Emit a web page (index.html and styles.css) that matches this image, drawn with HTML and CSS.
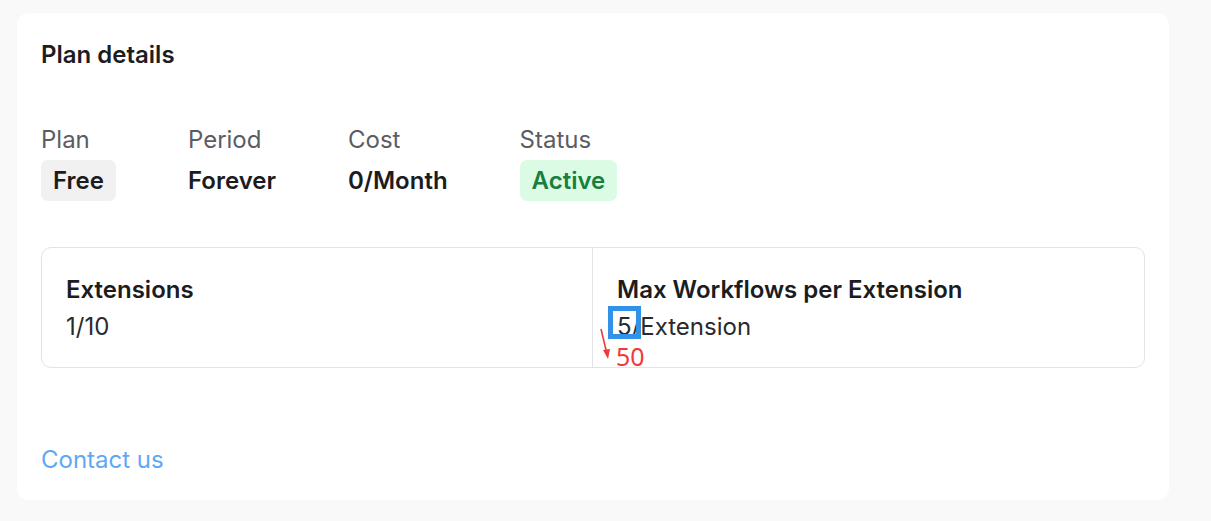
FILE: index.html
```html
<!DOCTYPE html>
<html lang="en">
<head>
<meta charset="utf-8">
<title>Plan details</title>
<link rel="stylesheet" href="styles.css">
</head>
<body>
<div class="page">
  <section class="card">
    <h2 class="title">Plan details</h2>
    <div class="summary">
      <div class="field">
        <div class="label">Plan</div>
        <div class="value badge badge-grey">Free</div>
      </div>
      <div class="field">
        <div class="label">Period</div>
        <div class="value">Forever</div>
      </div>
      <div class="field">
        <div class="label">Cost</div>
        <div class="value">0/Month</div>
      </div>
      <div class="field">
        <div class="label">Status</div>
        <div class="value badge badge-green">Active</div>
      </div>
    </div>
    <div class="limits">
      <div class="limit">
        <div class="limit-name">Extensions</div>
        <div class="limit-value">1/10</div>
      </div>
      <div class="limit limit-right">
        <div class="limit-name">Max Workflows per Extension</div>
        <div class="limit-value annotated">5/Extension
          <span class="mark-box"></span>
          <svg class="mark-arrow" width="14" height="32" viewBox="0 0 14 32"><line x1="2" y1="1" x2="7.5" y2="24" stroke="#f03a3a" stroke-width="1.6"/><polygon points="4,22 11,21 9,31" fill="#f03a3a"/></svg>
          <span class="mark-text">50</span>
        </div>
      </div>
    </div>
    <a class="contact" href="#">Contact us</a>
  </section>
</div>
</body>
</html>
```

FILE: styles.css
```css
html, body {
  margin: 0;
  padding: 0;
  background: #f9f9f9;
  font-family: Inter, "Liberation Sans", sans-serif;
}

.page {
  padding: 13px 0 0 17px;
}

.card {
  width: 1152px;
  height: 487px;
  box-sizing: border-box;
  background: #ffffff;
  border-radius: 12px;
  padding: 28px 24px 26px 24px;
  display: flex;
  flex-direction: column;
}

.title {
  margin: 0;
  font-size: 24px;
  line-height: 28px;
  font-weight: 600;
  color: #1d1d1f;
}

.summary {
  margin-top: 57px;
  display: flex;
  gap: 72px;
}

.field {
  display: flex;
  flex-direction: column;
  align-items: flex-start;
  gap: 6px;
}

.label {
  font-size: 24px;
  line-height: 28px;
  color: #5c5c63;
}

.value {
  font-size: 24px;
  line-height: 29px;
  font-weight: 600;
  color: #1c1c1e;
  padding: 6px 0;
}

.badge {
  padding: 6px 12px;
  border-radius: 7px;
}

.badge-grey {
  background: #f1f1f1;
}

.badge-green {
  background: #dcfbe5;
  color: #17803d;
}

.limits {
  margin-top: 46px;
  display: flex;
  border: 1px solid #e3e3e6;
  border-radius: 10px;
}

.limit {
  flex: 0 0 550px;
  box-sizing: border-box;
  padding: 23px 24px 22px 24px;
}

.limit-right {
  flex: 1 1 auto;
  border-left: 1px solid #e3e3e6;
}

.limit-name {
  font-size: 24px;
  line-height: 37px;
  font-weight: 600;
  color: #1c1c1e;
}

.limit-value {
  font-size: 24px;
  line-height: 37px;
  color: #2a2a2d;
}

.annotated {
  position: relative;
}

.mark-box {
  position: absolute;
  left: -9px;
  top: -2px;
  width: 23px;
  height: 23px;
  border: 5px solid #3291e8;
}

.mark-arrow {
  position: absolute;
  left: -18px;
  top: 20px;
}

.mark-text {
  position: absolute;
  left: -1px;
  top: 33px;
  font-family: "Noto Sans", "Liberation Sans", sans-serif;
  font-size: 25px;
  line-height: 30px;
  color: #f23a3a;
}

.contact {
  margin-top: auto;
  font-size: 24px;
  line-height: 28px;
  color: #5ea8f7;
  text-decoration: none;
  align-self: flex-start;
}
```
